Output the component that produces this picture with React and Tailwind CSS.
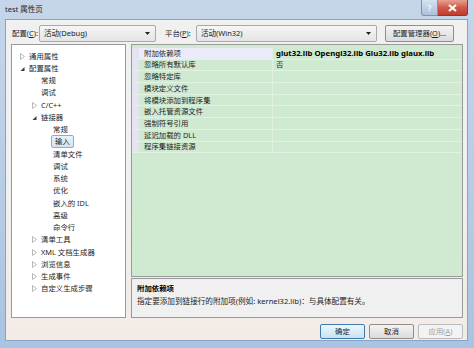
import React from "react";

const F = { fontFamily: '"Noto Sans", "Noto Sans CJK SC", sans-serif' };

const tree = [
  { t: "通用属性", l: 0, a: "c" },
  { t: "配置属性", l: 0, a: "e" },
  { t: "常规", l: 1 },
  { t: "调试", l: 1 },
  { t: "C/C++", l: 1, a: "c" },
  { t: "链接器", l: 1, a: "e" },
  { t: "常规", l: 2 },
  { t: "输入", l: 2, sel: true },
  { t: "清单文件", l: 2 },
  { t: "调试", l: 2 },
  { t: "系统", l: 2 },
  { t: "优化", l: 2 },
  { t: "嵌入的 IDL", l: 2 },
  { t: "高级", l: 2 },
  { t: "命令行", l: 2 },
  { t: "清单工具", l: 1, a: "c" },
  { t: "XML 文档生成器", l: 1, a: "c" },
  { t: "浏览信息", l: 1, a: "c" },
  { t: "生成事件", l: 1, a: "c" },
  { t: "自定义生成步骤", l: 1, a: "c" },
];

const props = [
  ["附加依赖项", "glut32.lib Opengl32.lib Glu32.lib glaux.lib"],
  ["忽略所有默认库", "否"],
  ["忽略特定库", ""],
  ["模块定义文件", ""],
  ["将模块添加到程序集", ""],
  ["嵌入托管资源文件", ""],
  ["强制符号引用", ""],
  ["延迟加载的 DLL", ""],
  ["程序集链接资源", ""],
];

function Arrow({ type }) {
  if (type === "c")
    return (
      <svg width="5" height="7" viewBox="0 0 5 7" className="shrink-0">
        <path d="M0.5 0.5 L4.5 3.5 L0.5 6.5 Z" fill="#fff" stroke="#a6a6a6" strokeWidth="0.8" />
      </svg>
    );
  if (type === "e")
    return (
      <svg width="5" height="7" viewBox="0 0 5 7" className="shrink-0">
        <path d="M4.5 2 L4.5 6 L0.5 6 Z" fill="#3c3c3c" />
      </svg>
    );
  return <span className="w-[5px] shrink-0" />;
}

function Combo({ text, w }) {
  return (
    <div
      className={`${w} h-[17px] flex items-center justify-between rounded-[2px] border border-[#a9a9a9] bg-gradient-to-b from-[#f6f6f6] to-[#e4e4e4] pl-[4px] pr-[5px]`}
    >
      <span className="text-[7.5px] text-[#1a1a1a] leading-none">{text}</span>
      <svg width="5" height="3" viewBox="0 0 5 3">
        <path d="M0 0 L5 0 L2.5 3 Z" fill="#222" />
      </svg>
    </div>
  );
}

export default function App() {
  return (
    <div
      style={F}
      className="w-[474px] h-[348px] flex flex-col bg-gradient-to-b from-[#c5d6ea] via-[#b8cde6] to-[#a9c3e2] overflow-hidden"
    >
      {/* title bar */}
      <div className="h-[19px] flex items-start shrink-0">
        <div className="pl-[5px] pt-[4px] text-[7.5px] leading-[10px] text-[#1c1c1c]">test 属性页</div>
        <div className="ml-auto flex mr-[6px]">
          <div className="w-[17px] h-[16px] rounded-bl-[3px] border border-[#7d93b3] border-t-0 bg-gradient-to-b from-[#d5e1ef] to-[#aebfd8] flex items-center justify-center text-[8px] font-bold text-[#f4f8fc]">
            ?
          </div>
          <div className="w-[30px] h-[16px] rounded-br-[3px] border border-[#8a3a3a] border-t-0 border-l-0 bg-gradient-to-b from-[#e6a092] via-[#cf5a4b] to-[#c23b2c] flex items-center justify-center">
            <svg width="9" height="8" viewBox="0 0 9 8">
              <path d="M1 1 L8 7 M8 1 L1 7" stroke="#fff" strokeWidth="2" />
            </svg>
          </div>
        </div>
      </div>

      {/* client */}
      <div className="ml-[5px] mr-[6px] mb-[7px] flex-1 border border-[#8ba3c2] bg-gradient-to-b from-[#f0f0f0] via-[#f0f0f0] to-[#f3ebe6] flex flex-col text-[7.4px] text-[#1e1e1e]">
        {/* config row */}
        <div className="mt-[5px] h-[17px] flex items-center">
          <span className="w-[33px] pl-[6px] whitespace-nowrap">配置(<span className="underline">C</span>):</span>
          <Combo text="活动(Debug)" w="w-[117px]" />
          <span className="ml-[9px] w-[31px] whitespace-nowrap">平台(<span className="underline">P</span>):</span>
          <Combo text="活动(Win32)" w="w-[181px]" />
          <div className="ml-[8px] w-[69px] h-[17px] rounded-[2px] border border-[#8e8f8f] bg-gradient-to-b from-[#f3f3f3] to-[#dcdcdc] flex items-center justify-center whitespace-nowrap">
            配置管理器(<span className="underline">O</span>)...
          </div>
        </div>

        {/* main */}
        <div className="mt-[2px] flex h-[274px]">
          {/* tree */}
          <div className="ml-[5px] w-[115px] h-full border border-[#9a9a9a] bg-white pt-[5px] overflow-hidden">
            {tree.map((it, i) => (
              <div
                key={i}
                className={`h-[12.25px] flex items-center ${it.l === 0 ? "pl-[8px]" : it.l === 1 ? "pl-[20px]" : "pl-[32px]"}`}
              >
                <Arrow type={it.a} />
                <span
                  className={`ml-[2px] whitespace-nowrap leading-[11px] px-[1px] ${
                    it.sel ? "bg-gradient-to-b from-[#eaf2fb] to-[#d2e3f6] border border-[#84acdd] rounded-[2px] ml-[-2px] px-[3px]" : "border border-transparent"
                  }`}
                >
                  {it.t}
                </span>
              </div>
            ))}
          </div>

          {/* right panel */}
          <div className="ml-[5px] w-[332px] h-full flex flex-col">
            <div className="h-[233px] border border-[#9a9a9a] bg-[#d0e9d1] pt-[3px]">
              {props.map(([k, v], i) => (
                <div key={i} className="h-[11.7px] flex border-b border-[#e2f2e2]">
                  <div className="w-[7px] bg-[#e4e4f1]" />
                  <div
                    className={`w-[134px] pl-[5px] flex items-center border-r border-[#e2f2e2] whitespace-nowrap ${
                      i === 0 ? "bg-[#ececf8]" : ""
                    }`}
                  >
                    {k}
                  </div>
                  <div className={`flex-1 pl-[3px] flex items-center whitespace-nowrap ${i === 0 ? "font-bold text-black text-[7.8px]" : ""}`}>
                    {v}
                  </div>
                </div>
              ))}
            </div>
            <div className="mt-[1px] flex-1 border border-[#9a9a9a] bg-[#f0f0f0] pl-[5px] pt-[4px]">
              <div className="font-bold leading-[11px] text-black">附加依赖项</div>
              <div className="mt-[2px] leading-[11px] whitespace-nowrap text-[7.6px]">
                指定要添加到链接行的附加项(例如: kernel32.lib)：与具体配置有关。
              </div>
            </div>
          </div>
        </div>

        {/* buttons */}
        <div className="mt-[6px] flex justify-end pr-[4px] gap-[4px]">
          <div className="w-[45px] h-[15px] rounded-[2px] border border-[#3d7bad] bg-gradient-to-b from-[#edf6fc] to-[#c9e2f3] flex items-center justify-center">
            确定
          </div>
          <div className="w-[45px] h-[15px] rounded-[2px] border border-[#8e8f8f] bg-gradient-to-b from-[#f3f3f3] to-[#dcdcdc] flex items-center justify-center">
            取消
          </div>
          <div className="w-[45px] h-[15px] rounded-[2px] border border-[#b8bcbf] bg-[#f3f3f3] flex items-center justify-center text-[#a2a2a2]">
            应用(<span className="underline">A</span>)
          </div>
        </div>
      </div>
    </div>
  );
}
